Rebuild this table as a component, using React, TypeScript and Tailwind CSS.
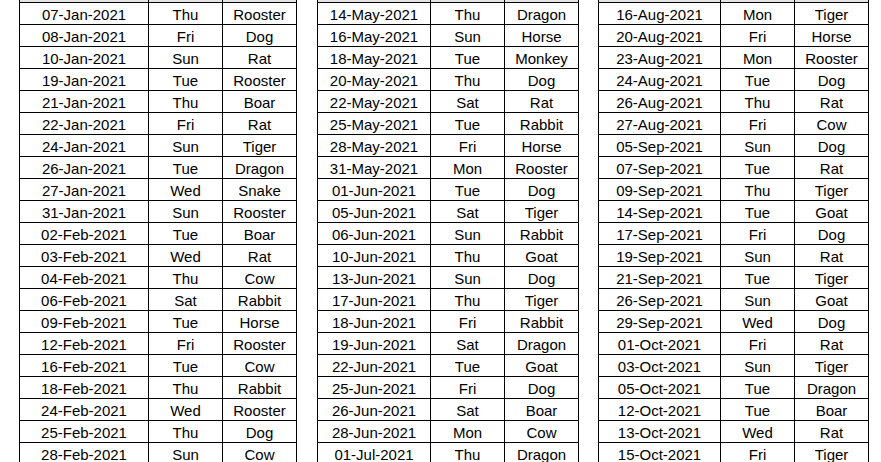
import React from "react";

type Row = [string, string, string];

const t1: Row[] = [
  ["07-Jan-2021", "Thu", "Rooster"],
  ["08-Jan-2021", "Fri", "Dog"],
  ["10-Jan-2021", "Sun", "Rat"],
  ["19-Jan-2021", "Tue", "Rooster"],
  ["21-Jan-2021", "Thu", "Boar"],
  ["22-Jan-2021", "Fri", "Rat"],
  ["24-Jan-2021", "Sun", "Tiger"],
  ["26-Jan-2021", "Tue", "Dragon"],
  ["27-Jan-2021", "Wed", "Snake"],
  ["31-Jan-2021", "Sun", "Rooster"],
  ["02-Feb-2021", "Tue", "Boar"],
  ["03-Feb-2021", "Wed", "Rat"],
  ["04-Feb-2021", "Thu", "Cow"],
  ["06-Feb-2021", "Sat", "Rabbit"],
  ["09-Feb-2021", "Tue", "Horse"],
  ["12-Feb-2021", "Fri", "Rooster"],
  ["16-Feb-2021", "Tue", "Cow"],
  ["18-Feb-2021", "Thu", "Rabbit"],
  ["24-Feb-2021", "Wed", "Rooster"],
  ["25-Feb-2021", "Thu", "Dog"],
  ["28-Feb-2021", "Sun", "Cow"],
];

const t2: Row[] = [
  ["14-May-2021", "Thu", "Dragon"],
  ["16-May-2021", "Sun", "Horse"],
  ["18-May-2021", "Tue", "Monkey"],
  ["20-May-2021", "Thu", "Dog"],
  ["22-May-2021", "Sat", "Rat"],
  ["25-May-2021", "Tue", "Rabbit"],
  ["28-May-2021", "Fri", "Horse"],
  ["31-May-2021", "Mon", "Rooster"],
  ["01-Jun-2021", "Tue", "Dog"],
  ["05-Jun-2021", "Sat", "Tiger"],
  ["06-Jun-2021", "Sun", "Rabbit"],
  ["10-Jun-2021", "Thu", "Goat"],
  ["13-Jun-2021", "Sun", "Dog"],
  ["17-Jun-2021", "Thu", "Tiger"],
  ["18-Jun-2021", "Fri", "Rabbit"],
  ["19-Jun-2021", "Sat", "Dragon"],
  ["22-Jun-2021", "Tue", "Goat"],
  ["25-Jun-2021", "Fri", "Dog"],
  ["26-Jun-2021", "Sat", "Boar"],
  ["28-Jun-2021", "Mon", "Cow"],
  ["01-Jul-2021", "Thu", "Dragon"],
];

const t3: Row[] = [
  ["16-Aug-2021", "Mon", "Tiger"],
  ["20-Aug-2021", "Fri", "Horse"],
  ["23-Aug-2021", "Mon", "Rooster"],
  ["24-Aug-2021", "Tue", "Dog"],
  ["26-Aug-2021", "Thu", "Rat"],
  ["27-Aug-2021", "Fri", "Cow"],
  ["05-Sep-2021", "Sun", "Dog"],
  ["07-Sep-2021", "Tue", "Rat"],
  ["09-Sep-2021", "Thu", "Tiger"],
  ["14-Sep-2021", "Tue", "Goat"],
  ["17-Sep-2021", "Fri", "Dog"],
  ["19-Sep-2021", "Sun", "Rat"],
  ["21-Sep-2021", "Tue", "Tiger"],
  ["26-Sep-2021", "Sun", "Goat"],
  ["29-Sep-2021", "Wed", "Dog"],
  ["01-Oct-2021", "Fri", "Rat"],
  ["03-Oct-2021", "Sun", "Tiger"],
  ["05-Oct-2021", "Tue", "Dragon"],
  ["12-Oct-2021", "Tue", "Boar"],
  ["13-Oct-2021", "Wed", "Rat"],
  ["15-Oct-2021", "Fri", "Tiger"],
];

const cellText =
  "h-[21px] pt-[1px] leading-[21px] text-center border-r border-black whitespace-nowrap overflow-visible";

function Table({ rows, firstW }: { rows: Row[]; firstW: string }) {
  return (
    <div className="flex flex-col border-l border-black shrink-0">
      <div className="flex h-[2px] bg-[#e4e4e4] border-b border-black box-content">
        <div className={`${firstW} h-[2px] border-r border-black`} />
        <div className="w-[74px] h-[2px] border-r border-black" />
        <div className="w-[74px] h-[2px] border-r border-black" />
      </div>
      {rows.map((r, i) => (
        <div key={i} className="flex border-b border-black">
          <div className={`${firstW} ${cellText}`}>{r[0]}</div>
          <div className={`w-[74px] ${cellText}`}>{r[1]}</div>
          <div className={`w-[74px] ${cellText}`}>{r[2]}</div>
        </div>
      ))}
    </div>
  );
}

export default function App() {
  return (
    <div
      className="w-[881px] h-[462px] overflow-hidden bg-white text-black text-[15px] flex items-start pl-[19px]"
      style={{ fontFamily: '"Liberation Sans", Arial, sans-serif' }}
    >
      <Table rows={t1} firstW="w-[129px]" />
      <div className="w-[20px] shrink-0" />
      <Table rows={t2} firstW="w-[113px]" />
      <div className="w-[19px] shrink-0" />
      <Table rows={t3} firstW="w-[122px]" />
    </div>
  );
}
